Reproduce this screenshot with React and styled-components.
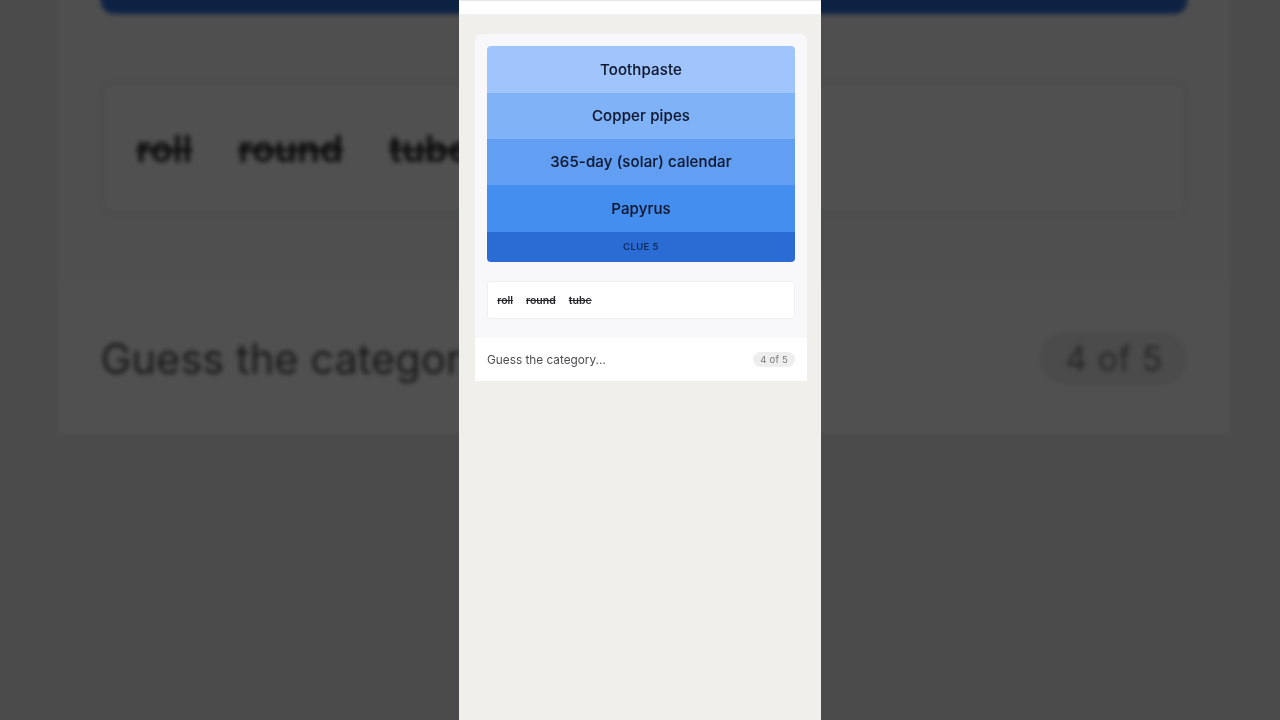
import React from 'react';
import styled, { createGlobalStyle } from 'styled-components';

const GlobalStyle = createGlobalStyle`
    html, body {
        margin: 0;
        height: 100%;
        background: #f0efec;
        overflow: hidden;
    }
    * {
        box-sizing: border-box;
    }
`;

const Stage = styled.div`
    position: relative;
    width: 1280px;
    height: 720px;
    display: flex;
    justify-content: center;
    overflow: hidden;
    font-family: Inter, "Liberation Sans", sans-serif;
`;

// blurred, zoomed copy of the column that fills the sides of the video frame
const Backdrop = styled.div`
    --page: #eeeeee;
    --card: #fbfbfb;
    position: absolute;
    inset: -20px;
    padding-top: 20px;
    display: flex;
    justify-content: center;
    overflow: hidden;
    background: var(--page);
    filter: blur(2.8px);
    & > div {
        flex: none;
        transform-origin: 50% 258px;
        transform: translate(0.5px, -258px) scale(3.53);
    }
`;

const Dimmer = styled.div`
    position: absolute;
    inset: 0;
    background: rgba(0, 0, 0, 0.686);
`;

const Foreground = styled.div`
    position: relative;
    flex: none;
    filter: blur(0.45px);
`;

const Phone = styled.div`
    width: 362px;
    height: 720px;
    background: var(--page, #f0efec);
`;

const TopBar = styled.div`
    height: 15px;
    background: #fff;
    border-top: 1px solid #e4e6ea;
    border-bottom: 1px solid #f2f3f3;
`;

const Content = styled.div`
    padding: 19px 14px 0 16px;
`;

const Card = styled.div`
    background: var(--card, #f8f8fa);
    border-radius: 6px 6px 0 0;
    overflow: hidden;
`;

const CardBody = styled.div`
    padding: 12px 12px 19px 12px;
`;

const ClueStack = styled.div`
    border-radius: 4px;
    overflow: hidden;
`;

const ClueRow = styled.div`
    height: ${p => p.$height}px;
    background: ${p => p.$color};
    display: flex;
    align-items: center;
    justify-content: center;
    color: #10192f;
    font-size: 15px;
    font-weight: 500;
    letter-spacing: 0.14px;
    -webkit-text-stroke: 0.12px #10192f;
    padding-bottom: 1px;
`;

const HiddenClue = styled(ClueRow)`
    color: #0f2a5c;
    font-size: 9.5px;
    font-weight: 600;
    letter-spacing: 0.4px;
    -webkit-text-stroke: 0;
    padding-bottom: 2px;
`;

const WrongGuesses = styled.div`
    height: 38px;
    margin-top: 19px;
    padding: 0 9.2px;
    display: flex;
    align-items: center;
    gap: 13px;
    background: #fff;
    border: 1px solid #eeeff2;
    border-radius: 3px;
`;

const Guess = styled.span`
    color: #2a2a2e;
    font-size: 10.5px;
    font-weight: 600;
    text-decoration: line-through;
`;

const InputRow = styled.div`
    height: 43px;
    padding: 0 12px;
    display: flex;
    align-items: center;
    justify-content: space-between;
    background: #fff;
`;

const Placeholder = styled.span`
    color: #4c4d51;
    font-size: 11.8px;
`;

const Counter = styled.span`
    padding: 2px 7px;
    border-radius: 8px;
    background: #eeeeee;
    color: #77787c;
    font-size: 9.5px;
    line-height: 11px;
    letter-spacing: 0.2px;
`;

const clues = [
    { text: 'Toothpaste', color: '#a0c4fc', height: 47 },
    { text: 'Copper pipes', color: '#7fb2f7', height: 46 },
    { text: '365-day (solar) calendar', color: '#629ff3', height: 46 },
    { text: 'Papyrus', color: '#448ef0', height: 47 },
];

const guesses = ['roll', 'round', 'tube'];

const GameColumn = () => (
    <Phone>
        <TopBar />
        <Content>
            <Card>
                <CardBody>
                    <ClueStack>
                        {clues.map(clue => (
                            <ClueRow key={clue.text} $color={clue.color} $height={clue.height}>
                                {clue.text}
                            </ClueRow>
                        ))}
                        <HiddenClue $color='#2b6cd4' $height={30}>CLUE 5</HiddenClue>
                    </ClueStack>
                    <WrongGuesses>
                        {guesses.map(word => <Guess key={word}>{word}</Guess>)}
                    </WrongGuesses>
                </CardBody>
                <InputRow>
                    <Placeholder>Guess the category...</Placeholder>
                    <Counter>4 of 5</Counter>
                </InputRow>
            </Card>
        </Content>
    </Phone>
);

const App = () => (
    <Stage>
        <GlobalStyle />
        <Backdrop aria-hidden='true'>
            <GameColumn />
        </Backdrop>
        <Dimmer />
        <Foreground>
            <GameColumn />
        </Foreground>
    </Stage>
);

export default App;
